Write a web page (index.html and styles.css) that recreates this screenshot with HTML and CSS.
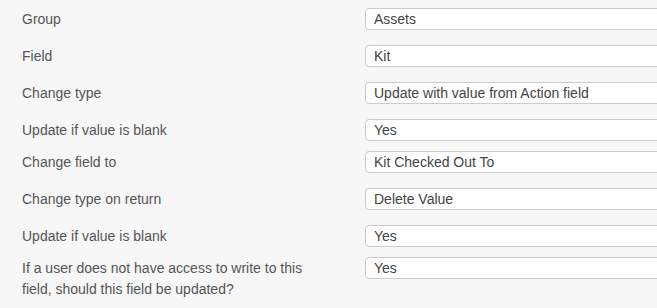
FILE: index.html
```html
<!DOCTYPE html>
<html lang="en">
<head>
    <meta charset="UTF-8">
    <meta name="viewport" content="width=device-width, initial-scale=1.0">
    <title>Action Settings</title>
    <link rel="stylesheet" href="styles.css">
</head>
<body>

<div class="settings">
    <div class="form-row">
        <label for="group">Group</label>
        <input type="text" id="group" value="Assets">
    </div>
    <div class="form-row">
        <label for="field">Field</label>
        <input type="text" id="field" value="Kit">
    </div>
    <div class="form-row">
        <label for="changeType">Change type</label>
        <input type="text" id="changeType" value="Update with value from Action field">
    </div>
    <div class="form-row tight">
        <label for="blank1">Update if value is blank</label>
        <input type="text" id="blank1" value="Yes">
    </div>
    <div class="form-row">
        <label for="changeTo">Change field to</label>
        <input type="text" id="changeTo" value="Kit Checked Out To">
    </div>
    <div class="form-row">
        <label for="returnType">Change type on return</label>
        <input type="text" id="returnType" value="Delete Value">
    </div>
    <div class="form-row tight">
        <label for="blank2">Update if value is blank</label>
        <input type="text" id="blank2" value="Yes">
    </div>
    <div class="form-row">
        <label for="noAccess">If a user does not have access to write to this field, should this field be updated?</label>
        <input type="text" id="noAccess" value="Yes">
    </div>
</div>

</body>
</html>
```

FILE: styles.css
```css
body {
    font-family: "Liberation Sans", Arial, sans-serif;
    font-size: 14px;
    background-color: #f7f7f7;
    color: #555;
    margin: 0;
    padding: 8px 0 0 22px;
    overflow: hidden;
}
.settings {
    overflow: hidden;
}
.form-row {
    display: flex;
    align-items: flex-start;
    margin-bottom: 15px;
}
.form-row.tight {
    margin-bottom: 10px;
}
.form-row label {
    width: 300px;
    margin-right: 43px;
    padding-top: 1px;
    line-height: 21px;
    flex-shrink: 0;
}
.form-row input {
    box-sizing: border-box;
    width: 320px;
    height: 22px;
    padding: 0 8px;
    margin: 0;
    font-family: "Liberation Sans", Arial, sans-serif;
    font-size: 14px;
    color: #444;
    background-color: #fff;
    border: 1px solid #ccc;
    border-radius: 4px;
    flex-shrink: 0;
}
```
